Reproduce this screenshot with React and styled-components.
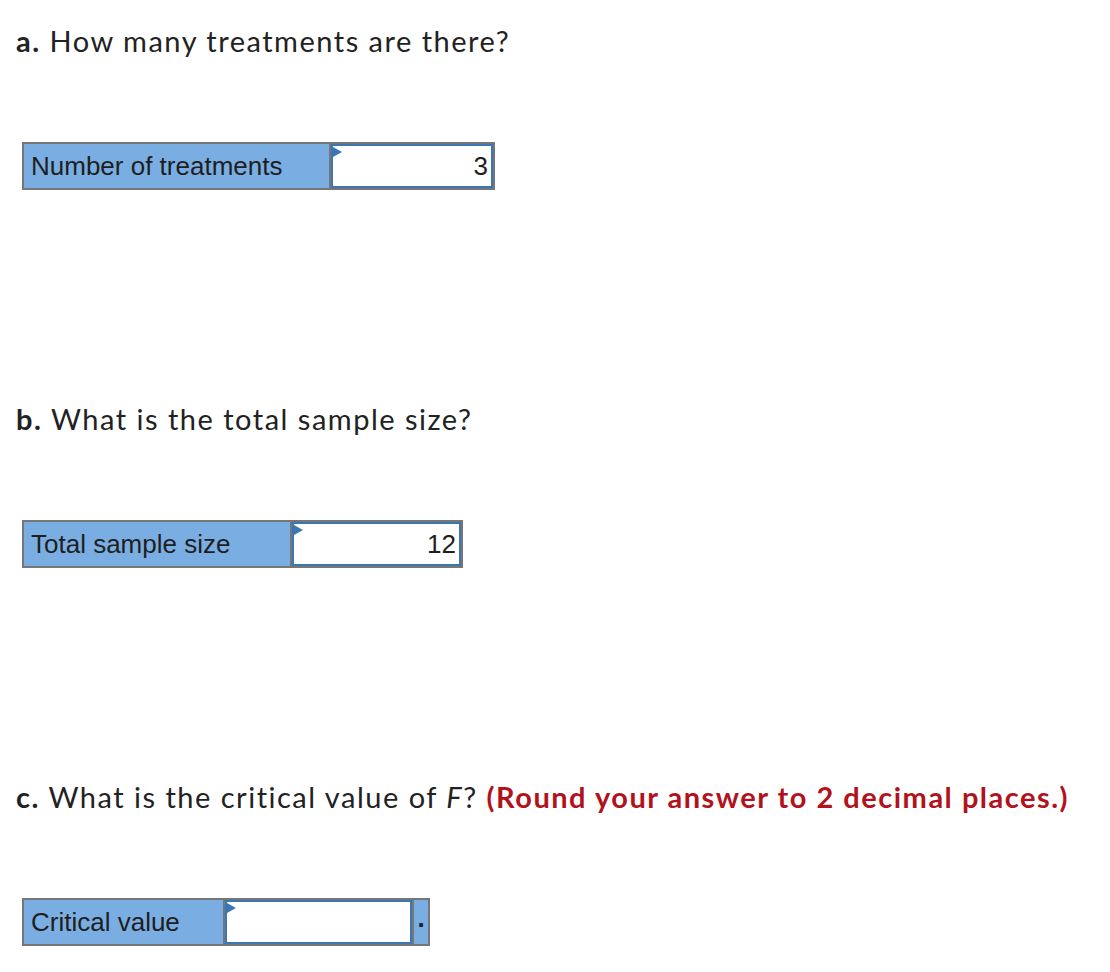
import React from "react";
import styled, { createGlobalStyle } from "styled-components";

const Global = createGlobalStyle`
  html, body { margin: 0; padding: 0; background: #fff; }
  body { font-family: "Lato", "Open Sans", sans-serif; color: #222; }
`;

const Page = styled.div`
  padding: 23px 0 0 16px;
  width: 1110px;
  height: 972px;
  box-sizing: border-box;
`;

const Section = styled.section`
  margin-top: ${(p) => p.$top || 0}px;
`;

const Question = styled.p`
  margin: 0;
  font-size: 29px;
  line-height: 36px;
  height: 36px;
  white-space: nowrap;
  letter-spacing: 1.5px;
`;

const Letter = styled.b`
  font-weight: 700;
`;

const Em = styled.i`
  font-style: italic;
`;

const Note = styled.b`
  color: #b1121c;
  font-weight: 700;
`;

const Table = styled.div`
  display: flex;
  margin: 83px 0 0 6px;
  width: ${(p) => p.$w}px;
  height: 48px;
  box-sizing: border-box;
  border: 2px solid #767676;
  background: #7aaee2;
  font-family: "Liberation Sans", Arial, sans-serif;
  font-size: 26px;
  color: #1e1e1e;
`;

const Label = styled.div`
  width: ${(p) => p.$w}px;
  flex: none;
  display: flex;
  align-items: center;
  padding-left: 7px;
  box-sizing: border-box;
  border-right: 2px solid #767676;
`;

const Input = styled.div`
  position: relative;
  flex: ${(p) => (p.$w ? "none" : "1")};
  width: ${(p) => (p.$w ? `${p.$w}px` : "auto")};
  background: #fff;
  border: 2px solid #3b77b7;
  box-sizing: border-box;
  display: flex;
  align-items: center;
  justify-content: flex-end;
  padding-right: 3px;
`;

const Marker = styled.span`
  position: absolute;
  left: 0;
  top: 1px;
  width: 0;
  height: 0;
  border-left: 9px solid #3b77b7;
  border-top: 5px solid transparent;
  border-bottom: 5px solid transparent;
`;

const Suffix = styled.div`
  flex: 1;
  border-left: 2px solid #767676;
  display: flex;
  align-items: flex-end;
  justify-content: center;
  padding-bottom: 13px;
  box-sizing: border-box;
  line-height: 1;
  font-weight: 700;
`;

export default function App() {
  return (
    <Page>
      <Global />
      <Section>
        <Question>
          <Letter>a.</Letter> How many treatments are there?
        </Question>
        <Table $w={473}>
          <Label $w={307}>Number of treatments</Label>
          <Input>
            <Marker />3
          </Input>
        </Table>
      </Section>
      <Section $top={211}>
        <Question>
          <Letter>b.</Letter> What is the total sample size?
        </Question>
        <Table $w={441}>
          <Label $w={268}>Total sample size</Label>
          <Input>
            <Marker />12
          </Input>
        </Table>
      </Section>
      <Section $top={211}>
        <Question>
          <Letter>c.</Letter> What is the critical value of <Em>F</Em>?{" "}
          <Note>(Round your answer to 2 decimal places.)</Note>
        </Question>
        <Table $w={408}>
          <Label $w={201}>Critical value</Label>
          <Input $w={187}>
            <Marker />
          </Input>
          <Suffix>.</Suffix>
        </Table>
      </Section>
    </Page>
  );
}
